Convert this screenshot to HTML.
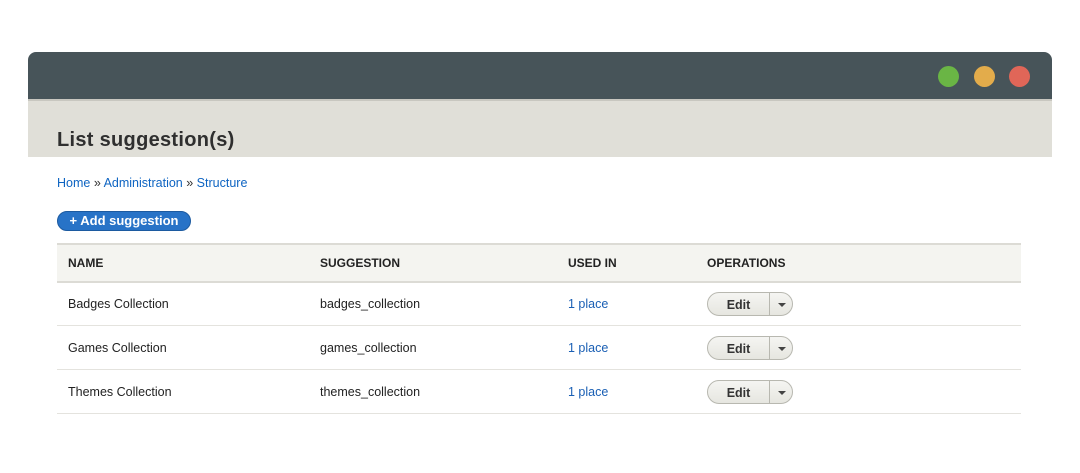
<!DOCTYPE html><html><head><style>
body{margin:0;width:1080px;height:473px;background:#fff;font-family:"Liberation Sans",sans-serif;position:relative;overflow:hidden}
.win{position:absolute;left:28px;top:52px;width:1024px;height:48px;background:#475459;border-radius:8px 8px 0 0}
.dot{position:absolute;top:14px;width:21px;height:21px;border-radius:50%}
.band{position:absolute;left:28px;top:99px;width:1024px;height:56px;background:#e0dfd8;border-top:2px solid #c8c7c0}
h1{position:absolute;left:57px;top:129px;margin:0;font-size:20px;font-weight:bold;color:#2f2f2f;letter-spacing:.3px}
.bc{position:absolute;left:57px;top:176px;font-size:12.5px;color:#0e64c2}
.bc span{color:#333}
.add{position:absolute;left:57px;top:211px;width:134px;height:20px;border-radius:10px;background:#2873c7;border:1px solid #1c5aa0;box-sizing:border-box;color:#fff;font-size:13px;font-weight:bold;line-height:18px;text-align:center}
.t{position:absolute;left:57px;width:964px;font-size:12.5px;color:#222}
.hd{top:243px;height:36px;background:#f4f4f0;border-top:2px solid #dcdbd5;border-bottom:2px solid #dcdbd5;font-weight:bold;font-size:12px}
.r{height:43px;border-bottom:1px solid #e4e3de}
.c{position:absolute;top:50%;transform:translateY(-50%)}
.lk{color:#1a5fb4}
.btn{position:absolute;left:650px;top:10px;width:86px;height:24px;border:1px solid #b8b8b0;border-radius:12px;background:linear-gradient(#f5f5f2,#e6e6e0);box-sizing:border-box}
.btn b{position:absolute;left:0;width:61px;text-align:center;top:5px;font-size:12.5px;color:#333}
.btn i{position:absolute;left:61px;top:0;height:22px;border-left:1px solid #b8b8b0}
.btn s{position:absolute;left:70px;top:10px;border:4px solid transparent;border-top:4px solid #444;border-bottom:0}
</style></head><body>
<div class="win"><div class="dot" style="left:910px;background:#6ab545"></div><div class="dot" style="left:946px;background:#e3ac4b"></div><div class="dot" style="left:981px;background:#e06658"></div></div>
<div class="band"></div>
<h1>List suggestion(s)</h1>
<div class="bc">Home <span>»</span> Administration <span>»</span> Structure</div>
<div class="add">+ Add suggestion</div>
<div class="t hd"><span class="c" style="left:11px">NAME</span><span class="c" style="left:263px">SUGGESTION</span><span class="c" style="left:511px">USED IN</span><span class="c" style="left:650px">OPERATIONS</span></div>
<div class="t r" style="top:282px"><span class="c" style="left:11px">Badges Collection</span><span class="c" style="left:263px">badges_collection</span><span class="c lk" style="left:511px">1 place</span><div class="btn"><b>Edit</b><i></i><s></s></div></div>
<div class="t r" style="top:326px"><span class="c" style="left:11px">Games Collection</span><span class="c" style="left:263px">games_collection</span><span class="c lk" style="left:511px">1 place</span><div class="btn"><b>Edit</b><i></i><s></s></div></div>
<div class="t r" style="top:370px"><span class="c" style="left:11px">Themes Collection</span><span class="c" style="left:263px">themes_collection</span><span class="c lk" style="left:511px">1 place</span><div class="btn"><b>Edit</b><i></i><s></s></div></div>
</body></html>
